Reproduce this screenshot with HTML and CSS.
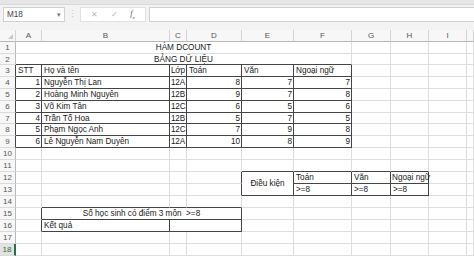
FILE: index.html
```html
<!DOCTYPE html>
<html lang="vi">
<head>
  <meta charset="UTF-8" />
  <title>Hàm DCOUNT</title>
  <link rel="stylesheet" href="styles.css">
</head>
<body>

  <!-- thanh công thức -->
  <div class="ribbon-edge"></div>
  <div class="formula-bar">
    <div class="name-box"><span>M18</span><span class="caret">&#9662;</span></div>
    <div class="grip">&#8942;</div>
    <div class="fx-buttons">
      <span class="icon">&#10005;</span>
      <span class="icon">&#10003;</span>
      <span class="fx">f<sub>x</sub></span>
    </div>
    <div class="formula-input"></div>
  </div>

  <!-- bảng tính -->
  <div class="sheet">
    <div class="corner"></div><div class="ch">A</div><div class="ch">B</div><div class="ch">C</div><div class="ch">D</div><div class="ch">E</div><div class="ch">F</div><div class="ch">G</div><div class="ch">H</div><div class="ch">I</div><div class="ch"></div>

    <div class="rh">1</div><div class="c span6 center">HÀM DCOUNT</div><div class="c"></div><div class="c"></div><div class="c"></div><div class="c"></div>
    <div class="rh">2</div><div class="c span6 center bb">BẢNG DỮ LIỆU</div><div class="c"></div><div class="c"></div><div class="c"></div><div class="c"></div>

    <div class="rh br">3</div><div class="c br bb">STT</div><div class="c br bb">Họ và tên</div><div class="c br bb narrow">Lớp</div><div class="c br bb">Toán</div><div class="c br bb">Văn</div><div class="c br bb">Ngoại ngữ</div><div class="c"></div><div class="c"></div><div class="c"></div><div class="c"></div>
    <div class="rh br">4</div><div class="c br bb num">1</div><div class="c br bb">Nguyễn Thị Lan</div><div class="c br bb narrow">12A</div><div class="c br bb num">8</div><div class="c br bb num">7</div><div class="c br bb num">7</div><div class="c"></div><div class="c"></div><div class="c"></div><div class="c"></div>
    <div class="rh br">5</div><div class="c br bb num">2</div><div class="c br bb">Hoàng Minh Nguyên</div><div class="c br bb narrow">12B</div><div class="c br bb num">9</div><div class="c br bb num">7</div><div class="c br bb num">8</div><div class="c"></div><div class="c"></div><div class="c"></div><div class="c"></div>
    <div class="rh br">6</div><div class="c br bb num">3</div><div class="c br bb">Võ Kim Tân</div><div class="c br bb narrow">12C</div><div class="c br bb num">6</div><div class="c br bb num">5</div><div class="c br bb num">6</div><div class="c"></div><div class="c"></div><div class="c"></div><div class="c"></div>
    <div class="rh br">7</div><div class="c br bb num">4</div><div class="c br bb">Trần Tố Hoa</div><div class="c br bb narrow">12B</div><div class="c br bb num">5</div><div class="c br bb num">7</div><div class="c br bb num">5</div><div class="c"></div><div class="c"></div><div class="c"></div><div class="c"></div>
    <div class="rh br">8</div><div class="c br bb num">5</div><div class="c br bb">Phạm Ngọc Anh</div><div class="c br bb narrow">12C</div><div class="c br bb num">7</div><div class="c br bb num">9</div><div class="c br bb num">8</div><div class="c"></div><div class="c"></div><div class="c"></div><div class="c"></div>
    <div class="rh br">9</div><div class="c br bb num">6</div><div class="c br bb">Lê Nguyễn Nam Duyên</div><div class="c br bb narrow">12A</div><div class="c br bb num">10</div><div class="c br bb num">8</div><div class="c br bb num">9</div><div class="c"></div><div class="c"></div><div class="c"></div><div class="c"></div>

    <div class="rh">10</div><div class="c"></div><div class="c"></div><div class="c"></div><div class="c"></div><div class="c"></div><div class="c"></div><div class="c"></div><div class="c"></div><div class="c"></div><div class="c"></div>
    <div class="rh">11</div><div class="c"></div><div class="c"></div><div class="c"></div><div class="c"></div><div class="c bb"></div><div class="c bb"></div><div class="c bb"></div><div class="c bb"></div><div class="c"></div><div class="c"></div>

    <!-- vùng điều kiện -->
    <div class="rh">12</div><div class="c"></div><div class="c"></div><div class="c"></div><div class="c br"></div><div class="c span-rows br bb center">Điều kiện</div><div class="c br bb">Toán</div><div class="c br bb">Văn</div><div class="c br bb overflow">Ngoại ngữ</div><div class="c"></div><div class="c"></div>
    <div class="rh">13</div><div class="c"></div><div class="c"></div><div class="c"></div><div class="c br"></div><div class="c br bb">&gt;=8</div><div class="c br bb">&gt;=8</div><div class="c br bb">&gt;=8</div><div class="c"></div><div class="c"></div>

    <div class="rh">14</div><div class="c"></div><div class="c bb"></div><div class="c bb"></div><div class="c bb"></div><div class="c"></div><div class="c"></div><div class="c"></div><div class="c"></div><div class="c"></div><div class="c"></div>

    <!-- vùng kết quả -->
    <div class="rh">15</div><div class="c br"></div><div class="c span3 br bb center">Số học sinh có điểm 3 môn&nbsp; &gt;=8</div><div class="c"></div><div class="c"></div><div class="c"></div><div class="c"></div><div class="c"></div><div class="c"></div>
    <div class="rh">16</div><div class="c br"></div><div class="c br bb">Kết quả</div><div class="c span2 br bb"></div><div class="c"></div><div class="c"></div><div class="c"></div><div class="c"></div><div class="c"></div><div class="c"></div>

    <div class="rh">17</div><div class="c"></div><div class="c"></div><div class="c"></div><div class="c"></div><div class="c"></div><div class="c"></div><div class="c"></div><div class="c"></div><div class="c"></div><div class="c"></div>
    <div class="rh active">18</div><div class="c"></div><div class="c"></div><div class="c"></div><div class="c"></div><div class="c"></div><div class="c"></div><div class="c"></div><div class="c"></div><div class="c"></div><div class="c"></div>
  </div>

</body>
</html>
```

FILE: styles.css
```css
/* ======= nền tảng ======= */
* {
  box-sizing: border-box;
  margin: 0;
  padding: 0;
}
body {
  font-family: "Liberation Sans", Arial, sans-serif;
  background: #fff;
  color: #1a1a1a;
  width: 474px;
  height: 258px;
  overflow: hidden;
}

/* ======= thanh công thức ======= */
.ribbon-edge {
  height: 5px;
  background: #e6e6e6;
  border-bottom: 1px solid #dadada;
}
.formula-bar {
  height: 25px;
  background: #f3f3f3;
  display: flex;
  align-items: flex-start;
  padding: 2px 0 0 3px;
}
.name-box {
  width: 62px;
  height: 15px;
  background: #fff;
  border: 1px solid #d0d0d0;
  display: flex;
  align-items: center;
  justify-content: space-between;
  padding: 0 3px;
  font-size: 8.2px;
  color: #444;
}
.caret {
  font-size: 7px;
  color: #777;
}
.grip {
  width: 15px;
  text-align: center;
  color: #c4c4c4;
  font-size: 9px;
  line-height: 15px;
}
.fx-buttons {
  width: 66px;
  height: 15px;
  background: #fff;
  border: 1px solid #e0e0e0;
  display: flex;
  align-items: center;
  justify-content: space-around;
  padding: 0 4px;
  color: #b8b8b8;
  font-size: 8px;
}
.fx {
  font-family: "Liberation Serif", serif;
  font-style: italic;
  color: #555;
  font-size: 8px;
}
.fx sub {
  font-size: 5px;
}
.formula-input {
  flex: 1;
  height: 15px;
  margin-left: 3px;
  background: #fff;
  border: 1px solid #d0d0d0;
  border-right: none;
}

/* ======= lưới bảng tính ======= */
.sheet {
  display: grid;
  grid-template-columns: 16px 26px 128px 17px 55px 52px 58px 39px 38px 38px 1fr;
  grid-template-rows: 12px 12px 11px 12px 12px 12px 12px 11px 12px 12px 12px 12px 12px 12px 12px 12px 12px 12px 12px;
  font-size: 8.2px;
}
.corner {
  background: #f7f7f7;
  border-right: 1px solid #d4d4d4;
  border-bottom: 1px solid #b8b8b8;
  position: relative;
}
.corner::after {
  content: "";
  position: absolute;
  right: 2px;
  bottom: 2px;
  border-left: 5px solid transparent;
  border-bottom: 5px solid #c8c8c8;
}
.ch {
  background: #f7f7f7;
  color: #555;
  font-size: 8px;
  display: flex;
  align-items: center;
  justify-content: center;
  border-right: 1px solid #d4d4d4;
  border-bottom: 1px solid #b8b8b8;
}
.rh {
  background: #f7f7f7;
  color: #555;
  font-size: 8px;
  display: flex;
  align-items: center;
  justify-content: center;
  border-right: 1px solid #b8b8b8;
  border-bottom: 1px solid #dadada;
}
.rh.active {
  background: #e2e2e2;
  color: #217346;
  border-right: 2px solid #217346;
}
.c {
  display: flex;
  align-items: center;
  padding: 0 2px;
  white-space: nowrap;
  border-right: 1px solid #dedede;
  border-bottom: 1px solid #dedede;
}
.rh.br,
.c.br {
  border-right-color: #454545;
}
.c.bb {
  border-bottom-color: #454545;
}
.num {
  justify-content: flex-end;
  padding-right: 1px;
}
.narrow {
  padding: 0 0 0 1px;
  letter-spacing: -0.2px;
}
.center {
  justify-content: center;
}
.overflow {
  overflow: visible;
  padding-left: 1px;
}
.span6 {
  grid-column: span 6;
}
.span3 {
  grid-column: span 3;
}
.span2 {
  grid-column: span 2;
}
.span-rows {
  grid-row: span 2;
}
```
